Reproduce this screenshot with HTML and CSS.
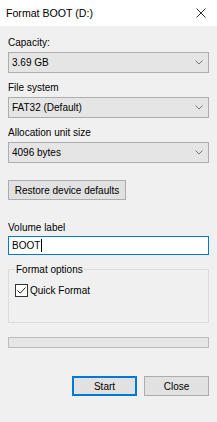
FILE: index.html
```html
<!DOCTYPE html>
<html lang="en">
<head>
    <meta charset="UTF-8">
    <title>Format BOOT (D:)</title>
    <link rel="stylesheet" href="styles.css">
</head>
<body>
    <div class="window">
        <div class="titlebar">
            <span class="title">Format BOOT (D:)</span>
            <svg class="close" width="10" height="10" viewBox="0 0 10 10">
                <path d="M0.5 0.5 L9.5 9.5 M9.5 0.5 L0.5 9.5" stroke="#333" stroke-width="1"/>
            </svg>
        </div>
        <div class="content">
            <div class="label first">Capacity:</div>
            <div class="combo"><span>3.69 GB</span><svg class="chev" width="8" height="5" viewBox="0 0 8 5"><path d="M0.5 0.5 L4 4 L7.5 0.5" fill="none" stroke="#777"/></svg></div>

            <div class="label">File system</div>
            <div class="combo"><span>FAT32 (Default)</span><svg class="chev" width="8" height="5" viewBox="0 0 8 5"><path d="M0.5 0.5 L4 4 L7.5 0.5" fill="none" stroke="#777"/></svg></div>

            <div class="label">Allocation unit size</div>
            <div class="combo"><span>4096 bytes</span><svg class="chev" width="8" height="5" viewBox="0 0 8 5"><path d="M0.5 0.5 L4 4 L7.5 0.5" fill="none" stroke="#777"/></svg></div>

            <button class="btn restore">Restore device defaults</button>

            <div class="label vol">Volume label</div>
            <div class="textbox">BOOT<span class="caret"></span></div>

            <fieldset class="group">
                <legend>Format options</legend>
                <label class="check">
                    <span class="box">
                        <svg width="11" height="11" viewBox="0 0 11 11"><path d="M1.5 5.5 L4.2 8.2 L9.5 2.5" fill="none" stroke="#222" stroke-width="1"/></svg>
                    </span>
                    Quick Format
                </label>
            </fieldset>

            <div class="progress"></div>

            <div class="actions">
                <button class="btn default">Start</button>
                <button class="btn">Close</button>
            </div>
        </div>
    </div>
</body>
</html>
```

FILE: styles.css
```css
body {
    margin: 0;
    padding: 0;
    font-family: "Liberation Sans", Arial, sans-serif;
    font-size: 10px;
    color: #000;
    background: #f0f0f0;
}
.window {
    width: 217px;
    height: 422px;
    background: #f0f0f0;
}
.titlebar {
    height: 26px;
    background: #fff;
    display: flex;
    align-items: center;
    justify-content: space-between;
    padding: 0 11px 0 6px;
}
.title {
    font-size: 10.6px;
    color: #000;
}
.close {
    display: block;
    margin-top: 0;
}
.content {
    padding: 0 8px;
}
.label {
    height: 13px;
    line-height: 13px;
    margin-top: 8px;
    margin-bottom: 3px;
    white-space: nowrap;
}
.label.first {
    margin-top: 10px;
}
.combo {
    height: 21px;
    box-sizing: border-box;
    border: 1px solid #adadad;
    background: #e5e5e5;
    display: flex;
    align-items: center;
    justify-content: space-between;
    padding: 0 4px 0 3px;
}
.chev {
    display: block;
    margin-right: 1px;
}
.btn {
    font-family: inherit;
    font-size: 10px;
    height: 20px;
    padding: 0;
    border: 1px solid #adadad;
    background: #e1e1e1;
    color: #000;
    display: block;
    white-space: nowrap;
}
.restore {
    margin-top: 17px;
    width: 118px;
}
.label.vol {
    margin-top: 21px;
    margin-bottom: 2px;
}
.textbox {
    height: 19px;
    box-sizing: border-box;
    border: 1px solid #0078d7;
    background: #fff;
    padding: 0 3px;
    display: flex;
    align-items: center;
}
.caret {
    display: inline-block;
    width: 1px;
    height: 13px;
    background: #000;
    margin-left: 1px;
}
.group {
    box-sizing: border-box;
    margin: 8px 0 0;
    padding: 8px 6px 0;
    height: 60px;
    border: 1px solid #dcdcdc;
    border-radius: 0;
}
.group legend {
    padding: 0 1px;
    line-height: 13px;
    font-size: 10px;
}
.check {
    display: flex;
    align-items: center;
    gap: 2px;
}
.box {
    width: 11px;
    height: 11px;
    border: 1px solid #333;
    background: #fff;
    display: flex;
}
.box svg {
    display: block;
}
.progress {
    margin-top: 14px;
    height: 11px;
    box-sizing: border-box;
    border: 1px solid #bcbcbc;
    background: #e6e6e6;
}
.actions {
    display: flex;
    justify-content: flex-end;
    gap: 7px;
    margin-top: 28px;
}
.actions .btn {
    width: 65px;
}
.btn.default {
    border: 1px solid #0078d7;
    box-shadow: inset 0 0 0 1px #0078d7;
}
```
